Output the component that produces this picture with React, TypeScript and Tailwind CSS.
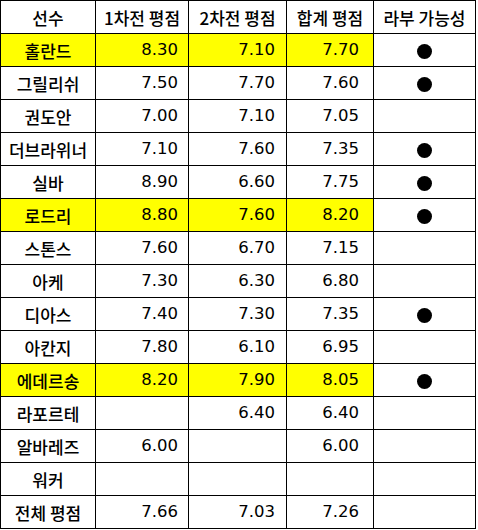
import React from "react";

type Row = { name: string; a: string; b: string; c: string; dot: boolean; hl?: boolean };

const rows: Row[] = [
  { name: "홀란드", a: "8.30", b: "7.10", c: "7.70", dot: true, hl: true },
  { name: "그릴리쉬", a: "7.50", b: "7.70", c: "7.60", dot: true },
  { name: "권도안", a: "7.00", b: "7.10", c: "7.05", dot: false },
  { name: "더브라위너", a: "7.10", b: "7.60", c: "7.35", dot: true },
  { name: "실바", a: "8.90", b: "6.60", c: "7.75", dot: true },
  { name: "로드리", a: "8.80", b: "7.60", c: "8.20", dot: true, hl: true },
  { name: "스톤스", a: "7.60", b: "6.70", c: "7.15", dot: false },
  { name: "아케", a: "7.30", b: "6.30", c: "6.80", dot: false },
  { name: "디아스", a: "7.40", b: "7.30", c: "7.35", dot: true },
  { name: "아칸지", a: "7.80", b: "6.10", c: "6.95", dot: false },
  { name: "에데르송", a: "8.20", b: "7.90", c: "8.05", dot: true, hl: true },
  { name: "라포르테", a: "", b: "6.40", c: "6.40", dot: false },
  { name: "알바레즈", a: "6.00", b: "", c: "6.00", dot: false },
  { name: "워커", a: "", b: "", c: "", dot: false },
  { name: "전체 평점", a: "7.66", b: "7.03", c: "7.26", dot: false },
];

const font = { fontFamily: '"Noto Sans CJK KR", "Noto Sans", sans-serif' };
const num = { fontFamily: '"DejaVu Sans", "Noto Sans CJK KR", sans-serif' };

export default function App() {
  return (
    <div className="bg-white w-[478px] h-[530px]" style={font}>
      <table className="border-collapse text-[17px] font-medium text-black leading-none">
        <colgroup>
          <col className="w-[95px]" />
          <col className="w-[93px]" />
          <col className="w-[98px]" />
          <col className="w-[87px]" />
          <col className="w-[102px]" />
        </colgroup>
        <thead>
          <tr className="h-[33px]">
            {["선수", "1차전 평점", "2차전 평점", "합계 평점", "라부 가능성"].map((h) => (
              <th key={h} className="border border-black font-medium text-center p-0 whitespace-nowrap">
                {h}
              </th>
            ))}
          </tr>
        </thead>
        <tbody>
          {rows.map((r) => {
            const bg = r.hl ? "bg-[#ffff00]" : "";
            return (
              <tr key={r.name} className="h-[33px]">
                <td className={`border border-black text-center p-0 whitespace-nowrap ${bg}`}>{r.name}</td>
                <td className={`border border-black text-right p-0 pr-[10px] text-[16.5px] font-normal ${bg}`} style={num}>{r.a}</td>
                <td className={`border border-black text-right p-0 pr-[11px] text-[16.5px] font-normal ${bg}`} style={num}>{r.b}</td>
                <td className={`border border-black text-right p-0 pr-[14px] text-[16.5px] font-normal ${bg}`} style={num}>{r.c}</td>
                <td className="border border-black text-center p-0">
                  {r.dot && <span className="inline-block w-[15px] h-[15px] rounded-full bg-black align-middle" />}
                </td>
              </tr>
            );
          })}
        </tbody>
      </table>
    </div>
  );
}
